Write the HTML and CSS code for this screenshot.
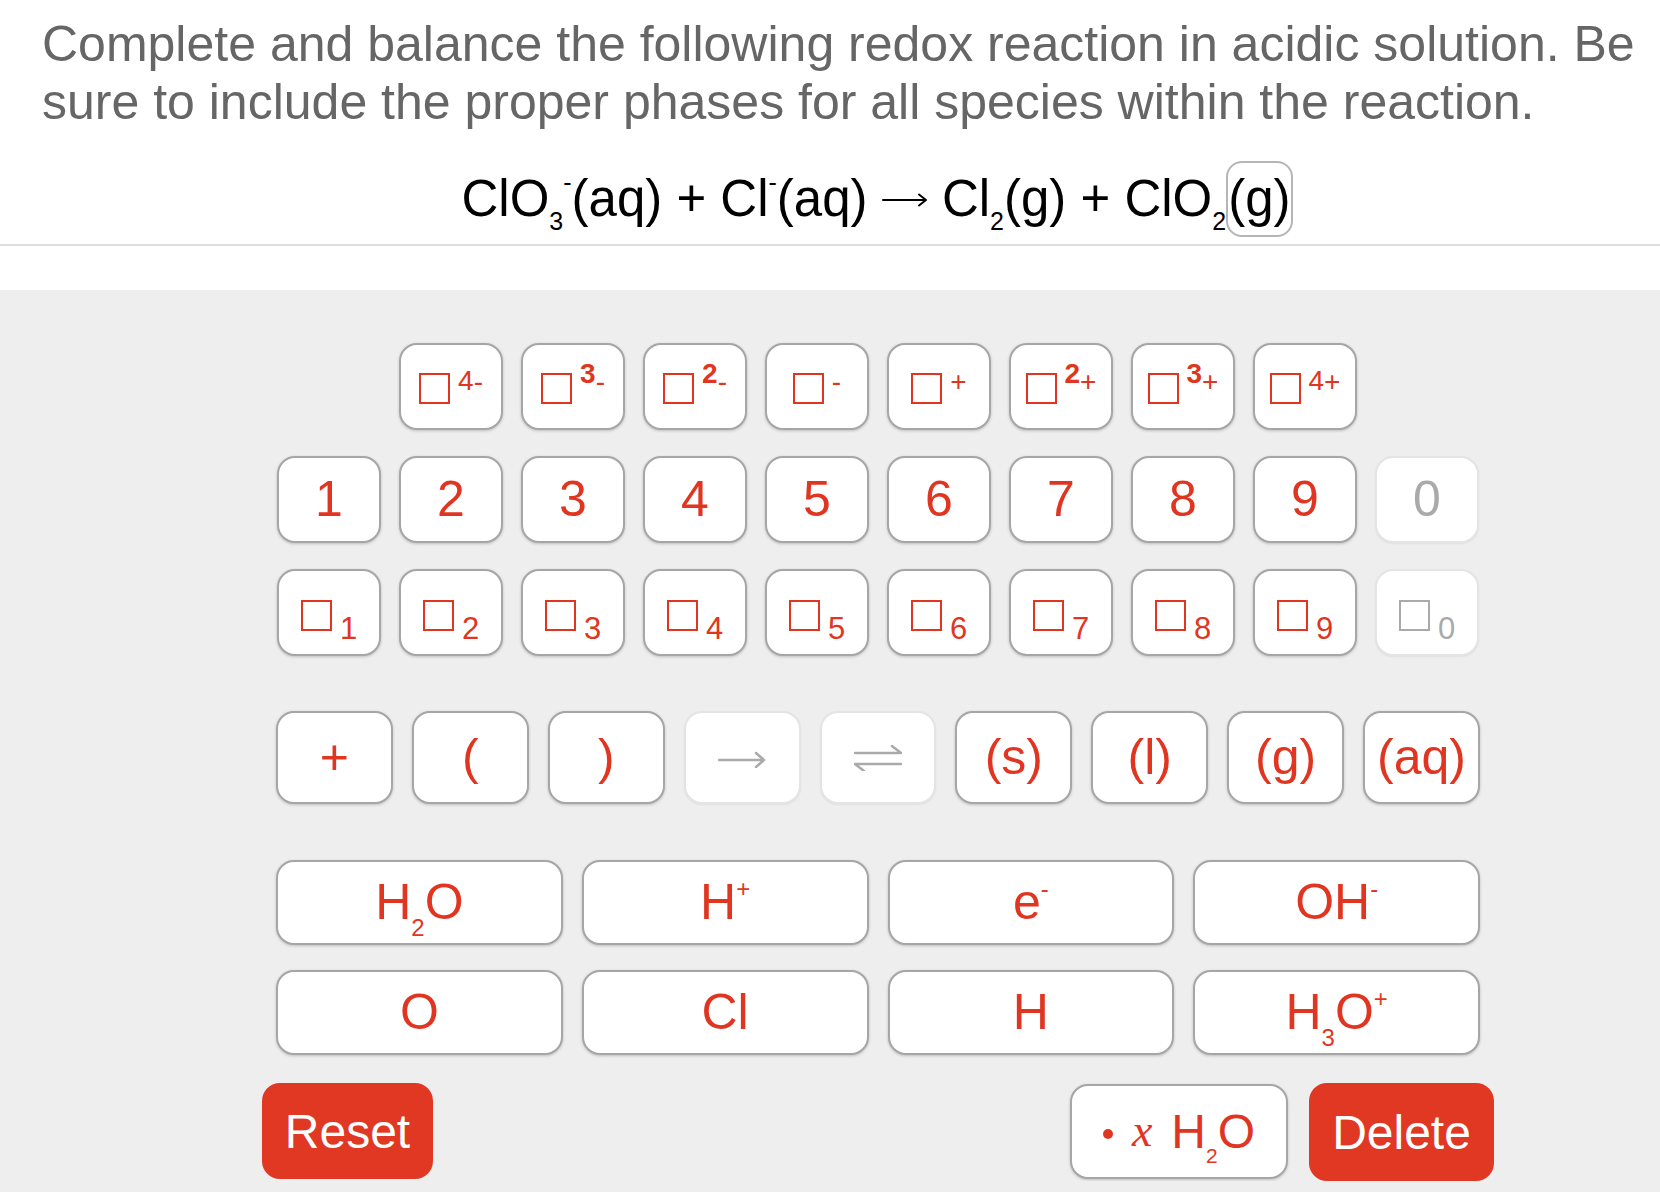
FILE: index.html
```html
<!DOCTYPE html>
<html>
<head>
  <title>Balance Redox Reaction</title>
  <link rel="stylesheet" href="styles.css">
</head>
<body>
  <div class="question">
    <p class="prompt">Complete and balance the following redox reaction in acidic solution. Be sure to include the proper phases for all species within the reaction.</p>
    <div class="equation">ClO<span class="sb">3</span><span class="sp">-</span>(aq) + Cl<span class="sp">-</span>(aq) <svg class="yields" width="46" height="20" viewBox="0 0 46 20"><path d="M1 10H44M44 10L37 4.5M44 10L37 15.5" fill="none" stroke="#000" stroke-width="2" stroke-linecap="round"/></svg> Cl<span class="sb">2</span>(g) + ClO<span class="sb">2</span><span class="cursor">(g)</span></div>
  </div>

  <div class="panel">
    <!-- charges, coefficients, subscripts -->
    <div class="keypad">
      <button class="key charge first"><span class="box"></span><span class="chg"><span class="lo">4</span><span class="sgn">-</span></span></button>
      <button class="key charge"><span class="box"></span><span class="chg"><b>3</b><span class="sgn">-</span></span></button>
      <button class="key charge"><span class="box"></span><span class="chg"><b>2</b><span class="sgn">-</span></span></button>
      <button class="key charge"><span class="box"></span><span class="chg"><span class="sgn">-</span></span></button>
      <button class="key charge"><span class="box"></span><span class="chg"><span class="sgn">+</span></span></button>
      <button class="key charge"><span class="box"></span><span class="chg"><b>2</b><span class="sgn">+</span></span></button>
      <button class="key charge"><span class="box"></span><span class="chg"><b>3</b><span class="sgn">+</span></span></button>
      <button class="key charge"><span class="box"></span><span class="chg"><span class="lo">4</span><span class="sgn">+</span></span></button>

      <button class="key row-start">1</button>
      <button class="key">2</button>
      <button class="key">3</button>
      <button class="key">4</button>
      <button class="key">5</button>
      <button class="key">6</button>
      <button class="key">7</button>
      <button class="key">8</button>
      <button class="key">9</button>
      <button class="key off">0</button>

      <button class="key index"><span class="box"></span><span class="idx">1</span></button>
      <button class="key index"><span class="box"></span><span class="idx">2</span></button>
      <button class="key index"><span class="box"></span><span class="idx">3</span></button>
      <button class="key index"><span class="box"></span><span class="idx">4</span></button>
      <button class="key index"><span class="box"></span><span class="idx">5</span></button>
      <button class="key index"><span class="box"></span><span class="idx">6</span></button>
      <button class="key index"><span class="box"></span><span class="idx">7</span></button>
      <button class="key index"><span class="box"></span><span class="idx">8</span></button>
      <button class="key index"><span class="box"></span><span class="idx">9</span></button>
      <button class="key index off"><span class="box"></span><span class="idx">0</span></button>
    </div>

    <!-- operators and phases -->
    <div class="phases">
      <button class="key">+</button>
      <button class="key">(</button>
      <button class="key">)</button>
      <button class="key off">
        <svg width="48" height="20" viewBox="0 0 48 20"><path d="M1 12H46M46 12L38 5M46 12L38 19" fill="none" stroke="#aaa" stroke-width="2.5" stroke-linecap="round"/></svg>
      </button>
      <button class="key off">
        <svg width="48" height="26" viewBox="0 0 48 26"><path d="M1 8H47L38 1M47 19H1L10 26" fill="none" stroke="#aaa" stroke-width="2.5" stroke-linecap="round" stroke-linejoin="round"/></svg>
      </button>
      <button class="key">(s)</button>
      <button class="key">(l)</button>
      <button class="key">(g)</button>
      <button class="key">(aq)</button>
    </div>

    <!-- common species -->
    <div class="species">
      <button class="key"><span>H<span class="sb">2</span>O</span></button>
      <button class="key"><span>H<span class="sp">+</span></span></button>
      <button class="key"><span>e<span class="sp">-</span></span></button>
      <button class="key"><span>OH<span class="sp">-</span></span></button>
      <button class="key"><span>O</span></button>
      <button class="key"><span>Cl</span></button>
      <button class="key"><span>H</span></button>
      <button class="key"><span>H<span class="sb">3</span>O<span class="sp">+</span></span></button>
    </div>

    <div class="actions">
      <button class="btn-red reset">Reset</button>
      <div class="right">
        <button class="key water"><span class="dot"></span><i class="var">x</i><span>H<span class="sb">2</span>O</span></button>
        <button class="btn-red delete">Delete</button>
      </div>
    </div>
  </div>
</body>
</html>
```

FILE: styles.css
```css
html, body {
  background: #eeeeee;
}
body {
  margin: 0;
  font-family: "Liberation Sans", Arial, sans-serif;
}

/* question header */
.question {
  background: #fff;
  padding-bottom: 44px;
}
.prompt {
  margin: 0;
  padding: 15px 0 0 42px;
  font-size: 50px;
  line-height: 58px;
  color: #666;
}
.equation {
  margin-top: 28px;
  padding: 0 0 5px 94px;
  border-bottom: 2px solid #ddd;
  text-align: center;
  font-size: 51px;
  line-height: 80px;
  color: #000;
}
.equation .sb {
  font-size: 25px;
  line-height: 0;
  vertical-align: -14px;
}
.equation .sp {
  font-size: 25px;
  line-height: 0;
  vertical-align: 25px;
}
.yields {
  vertical-align: 6px;
}
.cursor {
  display: inline-block;
  line-height: 72px;
  border: 2px solid #b5b5b5;
  border-radius: 16px;
}

/* keyboard panel */
.panel {
  padding: 53px 0 0 96px;
}
.keypad {
  display: grid;
  grid-template-columns: repeat(10, 104px);
  grid-auto-rows: 87px;
  gap: 26px 18px;
  width: 1202px;
  margin: 0 auto;
}
.keypad .first {
  grid-column-start: 2;
}
.keypad .row-start {
  grid-column-start: 1;
}
.phases {
  display: grid;
  grid-template-columns: repeat(9, 1fr);
  grid-auto-rows: 93px;
  gap: 19px;
  width: 1204px;
  margin: 55px auto 0;
}
.species {
  display: grid;
  grid-template-columns: repeat(4, 1fr);
  grid-auto-rows: 85px;
  gap: 25px 19px;
  width: 1204px;
  margin: 56px auto 0;
}
.actions {
  display: flex;
  justify-content: space-between;
  align-items: flex-start;
  width: 1232px;
  margin: 28px auto 0;
}
.actions .right {
  display: flex;
  align-items: flex-start;
  gap: 21px;
}

.key {
  display: flex;
  align-items: center;
  justify-content: center;
  padding: 0;
  background: #fff;
  border: 2px solid #a6a6a6;
  border-radius: 18px;
  box-shadow: 0 1px 3px rgba(0, 0, 0, 0.2);
  color: #e03621;
  font-family: inherit;
  font-size: 50px;
  line-height: 1.15;
  cursor: pointer;
}
.key.off {
  border-color: #e4e4e4;
  box-shadow: 0 1px 2px rgba(0, 0, 0, 0.06);
  color: #aaa;
}

.box {
  width: 27px;
  height: 27px;
  border: 2px solid currentColor;
}
.charge .box {
  margin-top: 3px;
}
.chg {
  display: flex;
  align-items: flex-start;
  height: 28px;
  margin: 0 0 26px 8px;
  font-size: 28px;
  line-height: 28px;
}
.chg .lo {
  margin-top: 7px;
}
.sgn {
  margin-top: 8px;
}
.index .box {
  margin-top: 5px;
}
.idx {
  margin: 33px 0 0 8px;
  font-size: 31px;
  line-height: 30px;
}

.species .sb {
  font-size: 24px;
  line-height: 0;
  vertical-align: -17px;
}
.species .sp {
  font-size: 24px;
  line-height: 0;
  vertical-align: 22px;
}

.btn-red {
  height: 96px;
  padding: 0;
  border: 0;
  border-radius: 18px;
  background: #e03822;
  color: #fff;
  font-family: inherit;
  font-size: 48px;
  cursor: pointer;
}
.reset {
  width: 171px;
}
.delete {
  width: 185px;
  height: 98px;
}
.water {
  width: 218px;
  height: 95px;
  margin-top: 1px;
  gap: 19px;
  font-size: 48px;
}
.water .sb {
  font-size: 21px;
  line-height: 0;
  vertical-align: -15px;
}
.dot {
  width: 10px;
  height: 10px;
  margin-top: 4px;
  border-radius: 50%;
  background: #e03621;
}
.var {
  font-family: "Liberation Serif", serif;
  font-size: 46px;
}
```
